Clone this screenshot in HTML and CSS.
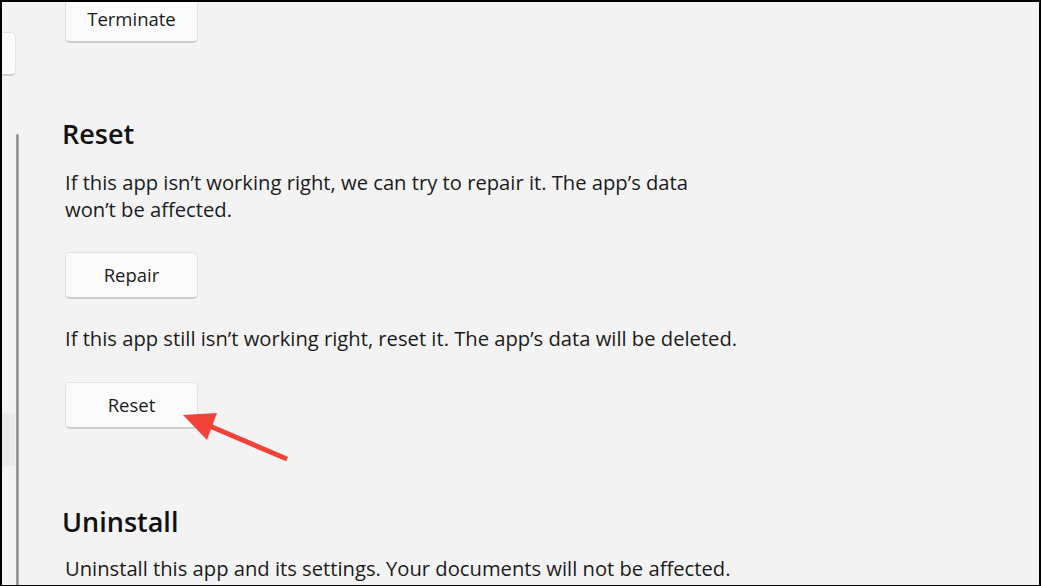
FILE: index.html
```html
<!DOCTYPE html>
<html>
<head>
<meta charset="utf-8">
<link rel="stylesheet" href="styles.css">
</head>
<body>
<div class="frame">
  <div class="nav">
    <div class="nav-card"></div>
    <div class="nav-hl"></div>
  </div>
  <div class="scrollbar"></div>
  <main class="content">
    <button class="btn btn-top">Terminate</button>
    <h2 class="title title-reset">Reset</h2>
    <p class="desc">If this app isn’t working right, we can try to repair it. The app’s data<br>won’t be affected.</p>
    <button class="btn">Repair</button>
    <p class="desc desc-2">If this app still isn’t working right, reset it. The app’s data will be deleted.</p>
    <button class="btn">Reset</button>
    <h2 class="title title-uninstall">Uninstall</h2>
    <p class="desc desc-3">Uninstall this app and its settings. Your documents will not be affected.</p>
  </main>
  <svg class="arrow" width="1041" height="586" viewBox="0 0 1041 586">
    <line x1="287" y1="459" x2="205" y2="424" stroke="#f0443a" stroke-width="5"/>
    <polygon points="183,415 217,413 207,440" fill="#f0443a"/>
  </svg>
</div>
</body>
</html>
```
FILE: styles.css
```css
html, body {
  margin: 0;
  padding: 0;
}
body {
  font-family: "Open Sans", "Noto Sans", sans-serif;
  color: #1b1b1b;
  background: #000;
}
.frame {
  position: relative;
  width: 1041px;
  height: 586px;
  box-sizing: border-box;
  border-top: 2px solid #000;
  border-left: 2px solid #000;
  border-right: 2px solid #000;
  border-bottom: 1px solid #000;
  background: #f3f3f3;
  display: flex;
  overflow: hidden;
}
.nav {
  width: 14px;
  flex: none;
  display: flex;
  flex-direction: column;
}
.nav-card {
  margin-top: 30px;
  height: 44px;
  width: 14px;
  box-sizing: border-box;
  background: #fbfbfb;
  border: 1px solid #e3e3e3;
  border-left: none;
  border-bottom: 2px solid #cfcfcf;
  border-radius: 0 5px 5px 0;
}
.nav-hl {
  margin-top: 337px;
  height: 53px;
  width: 13px;
  background: #eaeaea;
}
.scrollbar {
  flex: none;
  width: 3px;
  margin-top: 132px;
  background: linear-gradient(to right, #b8b8b8 0, #888 1px, #888 2px, #c9c9c9 3px);
  border-radius: 2px 2px 0 0;
}
.content {
  padding-left: 46px;
  display: flex;
  flex-direction: column;
  align-items: flex-start;
}
.btn {
  width: 133px;
  height: 47px;
  box-sizing: border-box;
  background: #fbfbfb;
  border: 1px solid #e2e2e2;
  border-bottom: 2px solid #cdcdcd;
  border-radius: 5px;
  font-family: "Open Sans", "Noto Sans", sans-serif;
  font-size: 18.5px;
  color: #1b1b1b;
  padding: 0 0 2px;
}
.btn-top {
  margin-top: -6px;
}
.title {
  margin: 0;
  font-size: 27px;
  font-weight: 600;
  color: #111;
  margin-left: -3px;
  line-height: 34px;
}
.title-reset {
  margin-top: 74px;
}
.desc {
  margin: 0;
  font-size: 20.2px;
  line-height: 27px;
}
.title-reset + .desc {
  margin-top: 18px;
  margin-bottom: 29px;
}
.desc-2 {
  margin-top: 26px;
  margin-bottom: 30px;
}
.title-uninstall {
  margin-top: 76px;
}
.desc-3 {
  margin-top: 16px;
}
.arrow {
  position: absolute;
  left: -2px;
  top: -2px;
  pointer-events: none;
}
```
